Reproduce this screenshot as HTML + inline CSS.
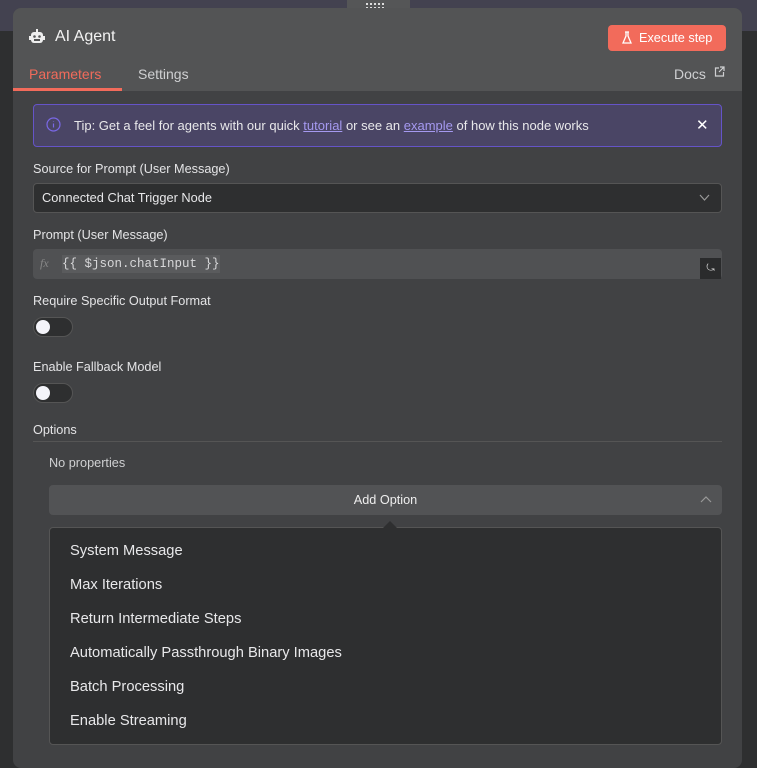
<!DOCTYPE html>
<html><head><style>
*{box-sizing:border-box;margin:0;padding:0}
body{width:757px;height:753px;background:#2e2f30;font-family:"Liberation Sans",sans-serif;position:relative;overflow:hidden;color:#e8e8ea}
.a{position:absolute}
.band{left:0;top:0;width:757px;height:31px;background:#434250}
.panel{left:13px;top:8px;width:729px;height:760px;background:#414244;border-radius:8px;overflow:hidden}
.head{left:0;top:0;width:729px;height:83px;background:#535455}
.lbl{font-size:12.7px;color:#e4e4e6}
.tog{width:40px;height:20px;border-radius:10px;background:#2e2f30;border:1px solid #555}
.tog i{position:absolute;left:2px;top:2px;width:14px;height:14px;border-radius:50%;background:#f4f4fa}
.item{left:70px;font-size:14.7px;color:#e8e8ea}
.dot{width:1.5px;height:1.5px;background:#ddd}
</style></head><body>
<div class="a band"></div>
<div class="a" style="left:347px;top:0;width:63px;height:9px;background:#555657"></div>
<div class="a dot" style="left:366px;top:3px"></div><div class="a dot" style="left:370px;top:3px"></div><div class="a dot" style="left:374px;top:3px"></div><div class="a dot" style="left:378px;top:3px"></div><div class="a dot" style="left:382px;top:3px"></div>
<div class="a dot" style="left:366px;top:7px"></div><div class="a dot" style="left:370px;top:7px"></div><div class="a dot" style="left:374px;top:7px"></div><div class="a dot" style="left:378px;top:7px"></div><div class="a dot" style="left:382px;top:7px"></div>
<div class="a panel">
 <div class="a head"></div>
 <svg class="a" style="left:16px;top:21px" width="16" height="16" viewBox="0 0 16 16"><rect x="7" y="0" width="2" height="3" fill="#eee"/><rect x="2" y="3" width="12" height="11" rx="3" fill="#eee"/><rect x="0" y="7" width="2" height="4" fill="#eee"/><rect x="14" y="7" width="2" height="4" fill="#eee"/><circle cx="5.5" cy="7.5" r="1.3" fill="#535455"/><circle cx="10.5" cy="7.5" r="1.3" fill="#535455"/><rect x="5" y="10" width="6" height="2" fill="#535455"/></svg>
 <div class="a" style="left:42px;top:20px;font-size:16px;color:#f2f2f2">AI Agent</div>
 <div class="a" style="left:595px;top:17px;width:118px;height:26px;background:#f26b5b;border-radius:4px;color:#fff;font-size:12.7px;line-height:26px;padding-left:31px">Execute step</div>
 <svg class="a" style="left:608px;top:23px" width="12" height="14" viewBox="0 0 12 14"><path d="M4 1h4M5 1v4L2 12h8L7 5V1" fill="none" stroke="#fff" stroke-width="1.3"/></svg>
 <div class="a" style="left:16px;top:58px;font-size:14px;color:#f26b5b">Parameters</div>
 <div class="a" style="left:0;top:80px;width:109px;height:3px;background:#f26b5b"></div>
 <div class="a" style="left:125px;top:58px;font-size:14px;color:#cfd0d2">Settings</div>
 <div class="a" style="left:661px;top:58px;font-size:14px;color:#cfd0d2">Docs</div>
 <svg class="a" style="left:701px;top:58px" width="11" height="11" viewBox="0 0 11 11"><path d="M5 2H1.5v8h8V6M6 1h4v4M10 1L5 6" fill="none" stroke="#cfd0d2" stroke-width="1.2"/></svg>
</div>
<div class="a" style="left:33px;top:104px;width:689px;height:43px;background:#4a4565;border:1px solid #6554c8;border-radius:4px"></div>
<svg class="a" style="left:46px;top:117px" width="15" height="15" viewBox="0 0 15 15"><circle cx="7.5" cy="7.5" r="6.5" fill="none" stroke="#7a68e6" stroke-width="1.2"/><path d="M7.5 6.5v4M7.5 4.5v.5" stroke="#7a68e6" stroke-width="1.2"/></svg>
<div class="a" style="left:74px;top:118px;font-size:13px;color:#e8e8ea">Tip: Get a feel for agents with our quick <u style="color:#a599f0">tutorial</u> or see an <u style="color:#a599f0">example</u> of how this node works</div>
<div class="a" style="left:696px;top:116px;font-size:15px;color:#fff">✕</div>
<div class="a lbl" style="left:33px;top:162px">Source for Prompt (User Message)</div>
<div class="a" style="left:33px;top:183px;width:689px;height:30px;background:#2e2f30;border:1px solid #555;border-radius:4px"></div>
<div class="a" style="left:42px;top:190px;font-size:12.8px;color:#e8e8ea">Connected Chat Trigger Node</div>
<svg class="a" style="left:699px;top:194px" width="11" height="8"><path d="M1 1l4.5 5L10 1" fill="none" stroke="#999" stroke-width="1.2"/></svg>
<div class="a lbl" style="left:33px;top:228px">Prompt (User Message)</div>
<div class="a" style="left:33px;top:249px;width:689px;height:30px;background:#505153;border-radius:4px"></div>
<div class="a" style="left:40px;top:256px;font-size:12px;font-style:italic;color:#888;font-family:'Liberation Serif',serif">fx</div>
<div class="a" style="left:62px;top:255px;height:18px;background:#5a5b5d;font-family:'Liberation Mono',monospace;font-size:12.5px;color:#d8d8da;line-height:18px">{{ $json.chatInput }}</div>
<div class="a" style="left:700px;top:258px;width:21px;height:21px;background:#2a2b2c;color:#ddd;font-size:10px;text-align:center;line-height:21px">⤿</div>
<div class="a lbl" style="left:33px;top:294px">Require Specific Output Format</div>
<div class="a tog" style="left:33px;top:317px"><i></i></div>
<div class="a lbl" style="left:33px;top:360px">Enable Fallback Model</div>
<div class="a tog" style="left:33px;top:383px"><i></i></div>
<div class="a lbl" style="left:33px;top:423px">Options</div>
<div class="a" style="left:33px;top:441px;width:689px;height:1px;background:#555"></div>
<div class="a" style="left:49px;top:456px;font-size:12.7px;color:#cfd0d2">No properties</div>
<div class="a" style="left:49px;top:485px;width:673px;height:30px;background:#525355;border-radius:4px;text-align:center;line-height:30px;font-size:12.7px;color:#eee">Add Option</div>
<svg class="a" style="left:700px;top:495px" width="12" height="8"><path d="M1 7l5-5 5 5" fill="none" stroke="#999" stroke-width="1.2"/></svg>
<div class="a" style="left:49px;top:527px;width:673px;height:218px;background:#2e2f30;border:1px solid #555;border-radius:4px"></div>
<div class="a" style="left:383px;top:521px;width:0;height:0;border-left:7px solid transparent;border-right:7px solid transparent;border-bottom:7px solid #2e2f30"></div>
<div class="a item" style="top:543px">System Message</div>
<div class="a item" style="top:577px">Max Iterations</div>
<div class="a item" style="top:611px">Return Intermediate Steps</div>
<div class="a item" style="top:645px">Automatically Passthrough Binary Images</div>
<div class="a item" style="top:679px">Batch Processing</div>
<div class="a item" style="top:713px">Enable Streaming</div>
</body></html>
